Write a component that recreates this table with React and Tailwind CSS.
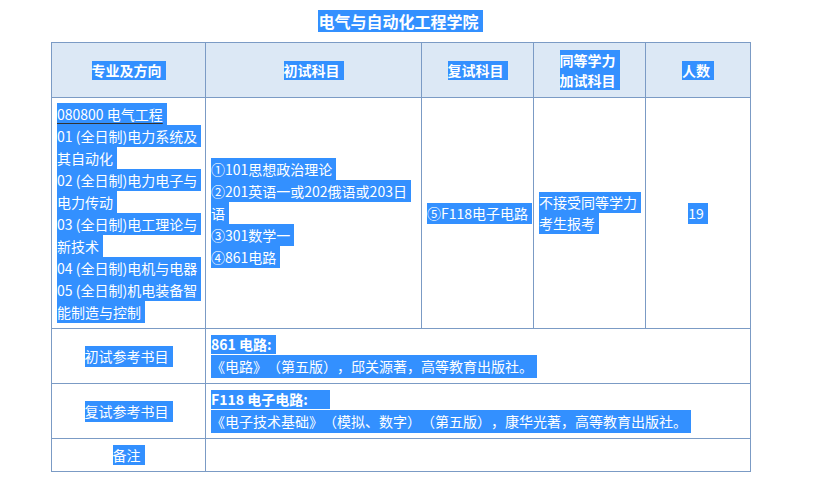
import React from 'react';

const cell = 'border-r border-b border-[#7b9bc5]';

function Hl({ children, className = '' }) {
  return <span className={`inline-block bg-[#3390ff] text-white pr-1 ${className}`}>{children}</span>;
}

const majors = [
  '01 (全日制)电力系统及',
  '其自动化',
  '02 (全日制)电力电子与',
  '电力传动',
  '03 (全日制)电工理论与',
  '新技术',
  '04 (全日制)电机与电器',
  '05 (全日制)机电装备智',
  '能制造与控制',
];

const firstExam = ['①101思想政治理论', '②201英语一或202俄语或203日', '语', '③301数学一', '④861电路'];

export default function App() {
  return (
    <div className="w-[801px] bg-white text-[14px] text-[#333] font-['Noto_Sans_CJK_SC',sans-serif] [text-spacing-trim:space-all]">
      <div className="pt-[10px] text-center text-[16px] font-bold leading-[22px]">
        <Hl className="leading-[22px]">电气与自动化工程学院</Hl>
      </div>

      <div className="ml-[51px] mt-[10px] grid w-[700px] grid-cols-[154px_216px_112px_112px_105px] grid-rows-[55px_231px_55px_55px_33px] border-l border-t border-[#7b9bc5]">
        {/* header */}
        {['专业及方向', '初试科目', '复试科目'].map((t) => (
          <div key={t} className={`${cell} flex items-center justify-center bg-[#dce8f5] font-bold`}>
            <Hl className="leading-[19px]">{t}</Hl>
          </div>
        ))}
        <div className={`${cell} flex flex-col items-center justify-center bg-[#dce8f5] font-bold`}>
          <Hl className="leading-[20px]">同等学力</Hl>
          <Hl className="leading-[20px]">加试科目</Hl>
        </div>
        <div className={`${cell} flex items-center justify-center bg-[#dce8f5] font-bold`}>
          <Hl className="leading-[19px]">人数</Hl>
        </div>

        {/* body */}
        <div className={`${cell} flex flex-col justify-center px-[5px] leading-[22px] whitespace-nowrap`}>
          <div>
            <Hl className="leading-[22px]">
              <span className="underline decoration-[#333] underline-offset-[3px]">080800 电气工程</span>
            </Hl>
          </div>
          {majors.map((m) => (
            <div key={m}>
              <Hl className="leading-[22px]">{m}</Hl>
            </div>
          ))}
        </div>
        <div className={`${cell} flex flex-col justify-center px-[5px] whitespace-nowrap`}>
          {firstExam.map((m) => (
            <div key={m}>
              <Hl className="leading-[22px]">{m}</Hl>
            </div>
          ))}
        </div>
        <div className={`${cell} flex items-center pl-[5px] whitespace-nowrap`}>
          <Hl className="leading-[21px]">⑤F118电子电路</Hl>
        </div>
        <div className={`${cell} flex flex-col justify-center pl-[5px] whitespace-nowrap`}>
          <div>
            <Hl className="leading-[21px]">不接受同等学力</Hl>
          </div>
          <div>
            <Hl className="leading-[21px]">考生报考</Hl>
          </div>
        </div>
        <div className={`${cell} flex items-center justify-center`}>
          <Hl className="leading-[21px]">19</Hl>
        </div>

        {/* reference books */}
        <div className={`${cell} flex items-center justify-center`}>
          <Hl className="leading-[21px]">初试参考书目</Hl>
        </div>
        <div className={`${cell} col-span-4 flex flex-col justify-center px-[5px] whitespace-nowrap`}>
          <div>
            <Hl className="font-bold leading-[19px]">861 电路:</Hl>
          </div>
          <div>
            <Hl className="leading-[23px]">《电路》（第五版），邱关源著，高等教育出版社。</Hl>
          </div>
        </div>

        <div className={`${cell} flex items-center justify-center`}>
          <Hl className="leading-[21px]">复试参考书目</Hl>
        </div>
        <div className={`${cell} col-span-4 flex flex-col justify-center px-[5px] whitespace-nowrap`}>
          <div>
            <Hl className="font-bold leading-[19px] pr-[22px]">F118 电子电路:</Hl>
          </div>
          <div>
            <Hl className="leading-[23px]">《电子技术基础》（模拟、数字）（第五版），康华光著，高等教育出版社。</Hl>
          </div>
        </div>

        <div className={`${cell} flex items-center justify-center`}>
          <Hl className="leading-[20px]">备注</Hl>
        </div>
        <div className={`${cell} col-span-4`} />
      </div>
    </div>
  );
}
